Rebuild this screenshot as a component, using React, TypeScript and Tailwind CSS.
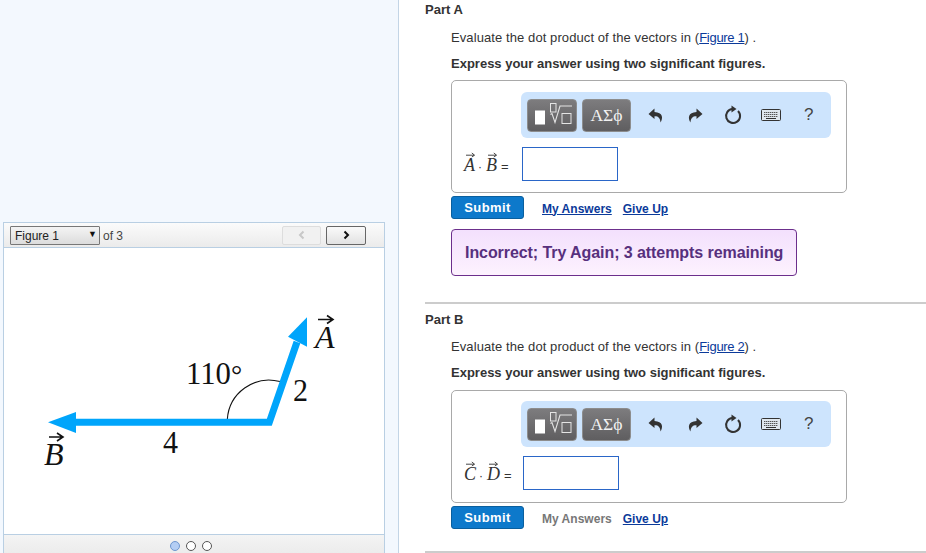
const sans = "font-['Liberation_Sans',Arial,sans-serif]";
const serif = "font-['Liberation_Serif',serif]";

function VecLetter({ letter }: { letter: string }) {
  return (
    <span className="relative inline-block">
      <svg className="absolute left-[2px] top-[0px]" width="10" height="6" viewBox="0 0 10 6">
        <path d="M0 3.2H8M5.8 1L8.6 3.2L5.8 5" fill="none" stroke="#333" strokeWidth="0.9" />
      </svg>
      <span className={`${serif} italic text-[18px] text-[#333]`}>{letter}</span>
    </span>
  );
}

function ReplyIcon({ className }: { className: string }) {
  return (
    <svg className={className} width="16" height="16" viewBox="0 0 16 16">
      <path d="M6.5 1.5L0.5 7L6.5 12V9.2C10 9 12 10.5 12.6 15.5C15.2 11 15 5.4 6.5 5Z" fill="#333" />
    </svg>
  );
}

function Toolbar() {
  return (
    <div className="flex h-[46px] w-[310px] items-center rounded-[6px] bg-[#cde4fd] pl-[6px]">
      <div className="flex h-[33px] w-[50px] items-center justify-center rounded-[4px] border border-[#8d8d8d] bg-gradient-to-b from-[#7d7c7e] to-[#5f5e60]">
        <svg width="42" height="28" viewBox="0 0 42 28">
          <rect x="4" y="9.5" width="10" height="14" fill="#fff" />
          <rect x="19.5" y="2.5" width="5.5" height="8.5" fill="none" stroke="#e4e4e4" strokeWidth="1" />
          <path d="M19.5 13.5L21 12.5L24 21.5L29 5H41" fill="none" stroke="#e4e4e4" strokeWidth="1.1" />
          <rect x="31" y="12.5" width="9" height="10" fill="none" stroke="#e4e4e4" strokeWidth="1" />
        </svg>
      </div>
      <div className={`${serif} ml-[5px] flex h-[33px] w-[49px] items-center justify-center rounded-[4px] border border-[#8d8d8d] bg-gradient-to-b from-[#7d7c7e] to-[#5f5e60] text-[17.5px] text-[#f2f2f2]`}>
        ΑΣϕ
      </div>
      <ReplyIcon className="ml-[17px]" />
      <ReplyIcon className="ml-[23px] -scale-x-100" />
      <svg className="ml-[21px]" width="18" height="20" viewBox="0 0 18 20">
        <path d="M14 6A7 7 0 1 1 8.5 4" fill="none" stroke="#333" strokeWidth="2" />
        <polygon points="7.5,0.5 12.5,4 7.5,7.5" fill="#333" />
      </svg>
      <svg className="ml-[19px]" width="20" height="13" viewBox="0 0 20 13">
        <rect x="0.5" y="0.5" width="19" height="11" rx="1" fill="#dfe7ee" stroke="#333" />
        <path d="M3 3.5H17M3 5.5H17M3 7.5H17" stroke="#555" strokeWidth="1" strokeDasharray="1.4 0.6" />
        <path d="M5 9.5H15" stroke="#333" strokeWidth="1" />
      </svg>
      <span className={`${sans} ml-[23px] text-[17px] text-[#444]`}>?</span>
    </div>
  );
}

function Part({
  title,
  figure,
  left,
  right,
  shift,
  answersActive,
  textTop,
  boxTop,
  boxPad,
}: {
  title: string;
  figure: string;
  left: string;
  right: string;
  shift: string;
  answersActive: boolean;
  textTop: string;
  boxTop: string;
  boxPad: string;
}) {
  return (
    <div>
      <div className="h-[18px] text-[13px] leading-[20px] font-bold text-[#333]">{title}</div>
      <div className="pl-[26px]">
        <p className={`${textTop} h-[18px] text-[13px] leading-[18px] text-[#333]`}>
          <span className="tracking-[0.09px]">Evaluate the dot product of the vectors in (</span>
          <span className="tracking-[-0.3px] text-[#0b3a9a] underline">{figure}</span>) .
        </p>
        <p className="mt-[8px] h-[18px] text-[13px] leading-[18px] font-bold text-[#333]">
          Express your answer using two significant figures.
        </p>
        <div className={`${boxTop} ${boxPad} h-[113px] w-[396px] rounded-[5px] border border-[#a9a9a9]`}>
          <div className={`ml-[69px] ${shift}`}>
            <Toolbar />
          </div>
          <div className="mt-[9px] flex items-center">
            <div className="flex w-[70px] items-baseline justify-start pl-[12px] pt-[3px]">
              <VecLetter letter={left} />
              <span className="mx-[3px] mr-[4px] text-[12px] text-[#333]">·</span>
              <VecLetter letter={right} />
              <span className="ml-[4px] text-[13px] text-[#333]">=</span>
            </div>
            <div className={shift}>
              <div className="h-[34px] w-[96px] border border-[#2a66c8] bg-white" />
            </div>
          </div>
        </div>
        <div className="mt-[3px] flex h-[23px] items-center">
          <button className="h-[23px] w-[73px] rounded-[3px] border border-[#0a5f9e] bg-[#0d79cb] pt-[1px] text-[13px] font-bold tracking-[0.4px] text-white">
            Submit
          </button>
          <span
            className={`ml-[18px] pt-[2px] text-[12px] font-bold tracking-[0.02px] ${answersActive ? "text-[#0b3a9a] underline" : "text-[#777]"}`}
          >
            My Answers
          </span>
          <span className="ml-[11px] pt-[2px] text-[12px] font-bold text-[#0b3a9a] underline">Give Up</span>
        </div>
      </div>
    </div>
  );
}

export default function App() {
  return (
    <div className={`${sans} flex h-[553px] w-[926px] overflow-hidden bg-white`}>
      {/* figure column */}
      <div className="h-full w-[399px] shrink-0 border-r border-[#c3d5e6] bg-[#f3f8fe] pt-[222px] pl-[3px]">
        <div className="flex h-[331px] w-[382px] flex-col border border-b-0 border-[#b9cfe3] bg-white">
          <div className="flex h-[25px] shrink-0 items-center border-b border-[#b9cfe3] bg-gradient-to-b from-[#fbfbfb] to-[#ebebeb] pl-[6px]">
            <div className="relative h-[19px] w-[90px] rounded-[1px] border border-[#777] bg-gradient-to-b from-[#f4f4f4] to-[#dcdcdc] pl-[4px] text-[12px] leading-[19px] text-[#222]">
              Figure 1
              <span className="absolute top-0 right-[2px] text-[9px] leading-[15px] text-[#111]">▼</span>
            </div>
            <span className="ml-[3px] pt-[1px] text-[12px] text-[#444]">of 3</span>
            <div className="ml-[159px] flex h-[19px] w-[39px] items-center justify-center rounded-[2px] border border-[#ddd] bg-[#f1f1f1]">
              <svg width="8" height="10" viewBox="0 0 8 10">
                <path d="M5.5 1.5L2 5L5.5 8.5" fill="none" stroke="#c8c8c8" strokeWidth="2" />
              </svg>
            </div>
            <div className="ml-[5px] flex h-[19px] w-[40px] items-center justify-center rounded-[2px] border border-[#666] bg-gradient-to-b from-[#fafafa] to-[#e2e2e2]">
              <svg width="8" height="10" viewBox="0 0 8 10">
                <path d="M2.5 1.5L6 5L2.5 8.5" fill="none" stroke="#111" strokeWidth="2" />
              </svg>
            </div>
          </div>
          <svg className="shrink-0" width="380" height="286" viewBox="4 248 380 286">
            <path d="M227.3 419.5A42 42 0 0 1 280 381.5" fill="none" stroke="#111" strokeWidth="1.1" />
            <path d="M76 422.3H269.3L297 342" fill="none" stroke="#00a5fb" strokeWidth="7" />
            <polygon points="48,422.3 76,412 76,433" fill="#00a5fb" />
            <polygon points="307,317.3 288,336.7 307,346.7" fill="#00a5fb" />
            <g fontFamily="'Liberation Serif',serif" fill="#111" fontSize="32">
              <text x="186" y="383.5" textLength="45" lengthAdjust="spacingAndGlyphs">110</text>
              <text x="231" y="383.5" fontSize="28">°</text>
              <text x="293" y="400.5" textLength="15" lengthAdjust="spacingAndGlyphs">2</text>
              <text x="163" y="453" textLength="15" lengthAdjust="spacingAndGlyphs">4</text>
              <text x="315" y="348" fontStyle="italic">A</text>
              <text x="44" y="465" fontStyle="italic">B</text>
            </g>
            <path d="M318 319.5H332M327 315.5L333 319.5L327 323.5" fill="none" stroke="#111" strokeWidth="1.6" />
            <path d="M49 437H62M57 433L63 437L57 441" fill="none" stroke="#111" strokeWidth="1.6" />
          </svg>
          <div className="flex flex-1 items-start justify-center gap-[6px] border-t border-[#b9cfe3] bg-gradient-to-b from-[#f4f4f4] to-[#ececec] pt-[6px] pr-[7px]">
            <span className="h-[10px] w-[10px] rounded-full border border-[#6f97cf] bg-[#b4cef4]" />
            <span className="h-[10px] w-[10px] rounded-full border border-[#555] bg-white" />
            <span className="h-[10px] w-[10px] rounded-full border border-[#555] bg-white" />
          </div>
        </div>
      </div>
      {/* questions */}
      <div className="flex-1 pl-[26px]">
        <Part title="Part A" figure="Figure 1" left="A" right="B" shift="" answersActive textTop="mt-[11px]" boxTop="mt-[7px]" boxPad="pt-[11px]" />
        <div className="mt-[10px] ml-[26px] flex h-[47px] w-[346px] items-center rounded-[4px] border border-[#6c2f8c] bg-gradient-to-b from-[#f3e0fd] to-[#fdf2fe] pl-[13px] text-[16px] font-bold tracking-[-0.07px] text-[#57307d]">
          Incorrect; Try Again; 3 attempts remaining
        </div>
        <div className="mt-[26px] mb-[6px] h-[2px] bg-[#cccccc]" />
        <Part title="Part B" figure="Figure 2" left="C" right="D" shift="ml-[1px]" answersActive={false} textTop="mt-[10px]" boxTop="mt-[8px]" boxPad="pt-[10px]" />
        <div className="mt-[22px] h-[2px] bg-[#cccccc]" />
      </div>
    </div>
  );
}
